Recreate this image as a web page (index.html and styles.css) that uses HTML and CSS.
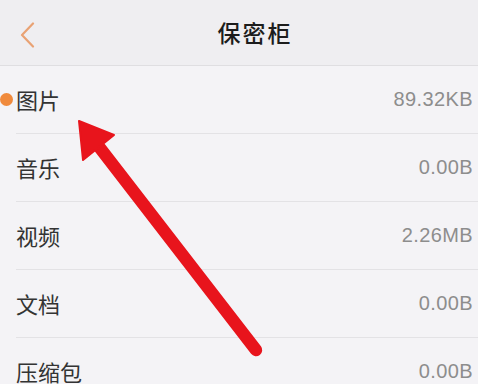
FILE: index.html
```html
<!DOCTYPE html>
<html lang="zh-CN">
<head>
    <meta charset="UTF-8">
    <meta name="viewport" content="width=device-width, initial-scale=1.0">
    <title>保密柜</title>
    <link rel="stylesheet" href="styles.css">
</head>
<body>
    <div class="page">
        <div class="header">
            <svg class="back" width="18" height="26" viewBox="0 0 18 26">
                <polyline points="14,1.5 3,13 14,24.5" fill="none" stroke="#e9a274" stroke-width="2.2" stroke-linecap="round" stroke-linejoin="round"/>
            </svg>
            <h1>保密柜</h1>
        </div>
        <ul class="list">
            <li class="row">
                <span class="dot"></span>
                <span class="label">图片</span>
                <span class="value">89.32KB</span>
            </li>
            <li class="row">
                <span class="label">音乐</span>
                <span class="value">0.00B</span>
            </li>
            <li class="row">
                <span class="label">视频</span>
                <span class="value">2.26MB</span>
            </li>
            <li class="row">
                <span class="label">文档</span>
                <span class="value">0.00B</span>
            </li>
            <li class="row">
                <span class="label">压缩包</span>
                <span class="value">0.00B</span>
            </li>
        </ul>

        <!-- annotation arrow drawn over the list -->
        <svg class="arrow" width="478" height="384" viewBox="0 0 478 384">
            <line x1="256" y1="350" x2="100" y2="148" stroke="#e8141c" stroke-width="12.5" stroke-linecap="round"/>
            <polygon points="79,121 114,135 83,160" fill="#e8141c" stroke="#e8141c" stroke-width="2" stroke-linejoin="round"/>
        </svg>
    </div>
</body>
</html>
```

FILE: styles.css
```css
body {
    margin: 0;
    padding: 0;
    background-color: #f4f3f6;
    font-family: "Noto Sans CJK SC", "Noto Sans", sans-serif;
}

.page {
    position: relative;
    width: 478px;
    height: 384px;
    overflow: hidden;
}

.header {
    position: relative;
    height: 65px;
    background-color: #efeef1;
    border-bottom: 1px solid #dfdee1;
    display: flex;
    align-items: center;
    justify-content: center;
}

.header .back {
    position: absolute;
    left: 19px;
    top: 22px;
}

.header h1 {
    margin: 0 0 2px 32px;
    font-size: 23px;
    font-weight: 500;
    color: #1c1c1c;
    letter-spacing: 2px;
}

.list {
    list-style: none;
    margin: 0;
    padding: 0 0 0 16px;
}

.row {
    position: relative;
    height: 67px;
    border-bottom: 1px solid #e3e2e5;
    display: flex;
    align-items: center;
    justify-content: space-between;
    padding-right: 5px;
}

.label {
    font-size: 22px;
    color: #333;
    padding-bottom: 2px;
}

.value {
    font-family: "Liberation Sans", Arial, sans-serif;
    font-size: 20px;
    color: #8d8d8d;
    letter-spacing: 0.4px;
}

.dot {
    position: absolute;
    left: -16px;
    top: 27px;
    width: 13px;
    height: 13px;
    border-radius: 50%;
    background-color: #f08a3c;
}

.arrow {
    position: absolute;
    left: 0;
    top: 0;
}
```
